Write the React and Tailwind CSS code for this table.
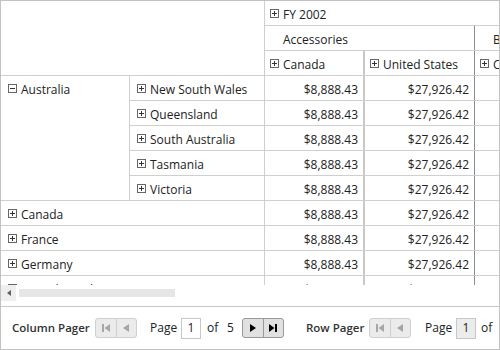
import React from "react";

const font = { fontFamily: '"Open Sans", "Noto Sans", sans-serif' };

const Toggle = ({ open }) => (
  <svg width="9" height="9" viewBox="0 0 9 9" className="shrink-0 -mt-[2px]">
    <rect x="0.5" y="0.5" width="8" height="8" fill="white" stroke="#666" />
    <line x1="2" y1="4.5" x2="7" y2="4.5" stroke="#333" />
    {!open && <line x1="4.5" y1="2" x2="4.5" y2="7" stroke="#333" />}
  </svg>
);

const states = ["New South Wales", "Queensland", "South Australia", "Tasmania", "Victoria"];
const countries = ["Canada", "France", "Germany", "United Kingdom"];

const Values = () => (
  <>
    <div className="w-[100px] shrink-0 h-full border-r-2 border-[#c8c8c8] flex items-center justify-end pr-[5px] pt-[3px]">
      $8,888.43
    </div>
    <div className="w-[110px] shrink-0 h-full border-r border-[#8c8c8c] flex items-center justify-end pr-[5px] pt-[3px]">
      $27,926.42
    </div>
    <div className="w-[120px] shrink-0 h-full"></div>
  </>
);

const Icon = ({ kind, color }) => (
  <svg width="10" height="10" viewBox="0 0 10 10" fill={color}>
    {kind === "first" && (
      <>
        <rect x="1" y="1" width="2" height="8" />
        <polygon points="9,1 9,9 3.5,5" />
      </>
    )}
    {kind === "prev" && <polygon points="8,1 8,9 2,5" />}
    {kind === "next" && <polygon points="2,1 2,9 8,5" />}
    {kind === "last" && (
      <>
        <polygon points="1,1 1,9 6.5,5" />
        <rect x="7" y="1" width="2" height="8" />
      </>
    )}
  </svg>
);

const Buttons = ({ enabled, kinds }) => (
  <div
    className={`flex h-[20px] w-[42px] rounded-[3px] border ${
      enabled ? "border-[#9a9a9a] bg-[#e1e1e1]" : "border-[#cfcfcf] bg-[#ebebeb]"
    }`}
  >
    <div className={`flex-1 flex items-center justify-center border-r ${enabled ? "border-[#9a9a9a]" : "border-[#cfcfcf]"}`}>
      <Icon kind={kinds[0]} color={enabled ? "#000" : "#a6a6a6"} />
    </div>
    <div className="flex-1 flex items-center justify-center">
      <Icon kind={kinds[1]} color={enabled ? "#000" : "#a6a6a6"} />
    </div>
  </div>
);

export default function App() {
  return (
    <div style={font} className="w-[500px] h-[350px] border border-[#c2c2c2] flex flex-col text-[12px] text-[#222] bg-white overflow-hidden">
      {/* grid viewport */}
      <div className="h-[284px] overflow-hidden shrink-0 flex flex-col">
        {/* column headers */}
        <div className="flex shrink-0">
          <div className="w-[264px] h-[75px] shrink-0 border-r border-b border-[#cfcfcf]"></div>
          <div className="flex flex-col w-[340px] shrink-0">
            <div className="h-[25px] border-b border-[#cfcfcf] flex items-center pl-[5px] pt-[3px] gap-[4px]">
              <Toggle />
              <span>FY 2002</span>
            </div>
            <div className="h-[25px] border-b border-[#cfcfcf] flex">
              <div className="w-[210px] shrink-0 border-r border-[#8c8c8c] flex items-center pl-[18px] pt-[3px]">Accessories</div>
              <div className="flex items-center pl-[18px] pt-[3px]">Bikes</div>
            </div>
            <div className="h-[25px] border-b border-[#cfcfcf] flex">
              <div className="w-[100px] shrink-0 border-r-2 border-[#c8c8c8] flex items-center pl-[5px] pt-[3px] gap-[4px]">
                <Toggle />
                <span>Canada</span>
              </div>
              <div className="w-[110px] shrink-0 border-r border-[#8c8c8c] flex items-center pl-[5px] pt-[3px] gap-[4px]">
                <Toggle />
                <span>United States</span>
              </div>
              <div className="flex items-center pl-[5px] pt-[3px] gap-[4px]">
                <Toggle />
                <span>Canada</span>
              </div>
            </div>
          </div>
        </div>

        {/* Australia group */}
        <div className="flex shrink-0">
          <div className="w-[129px] h-[125px] shrink-0 border-r border-b border-[#cfcfcf]">
            <div className="h-[24px] flex items-center pl-[7px] pt-[3px] gap-[4px]">
              <Toggle open />
              <span>Australia</span>
            </div>
          </div>
          <div className="flex flex-col">
            {states.map((s) => (
              <div key={s} className="h-[25px] border-b border-[#cfcfcf] flex">
                <div className="w-[135px] shrink-0 h-full border-r border-[#cfcfcf] flex items-center pl-[7px] pt-[3px] gap-[4px]">
                  <Toggle />
                  <span className="whitespace-nowrap">{s}</span>
                </div>
                <Values />
              </div>
            ))}
          </div>
        </div>

        {countries.map((c) => (
          <div key={c} className="h-[25px] shrink-0 border-b border-[#cfcfcf] flex">
            <div className="w-[264px] shrink-0 h-full border-r border-[#cfcfcf] flex items-center pl-[7px] pt-[3px] gap-[4px]">
              <Toggle />
              <span>{c}</span>
            </div>
            <Values />
          </div>
        ))}
      </div>

      {/* horizontal scrollbar */}
      <div className="h-[16px] shrink-0 flex items-center">
        <div className="w-[15px] h-full bg-[#efefef] flex items-center justify-center">
          <svg width="4" height="6" viewBox="0 0 4 6">
            <polygon points="4,0 4,6 0,3" fill="#606060" />
          </svg>
        </div>
        <div className="ml-[3px] w-[156px] h-[8px] bg-[#e6e6e6]"></div>
      </div>
      <div className="h-[5px] shrink-0"></div>

      {/* pager */}
      <div className="h-[43px] shrink-0 border-t border-[#c8c8c8] flex items-center whitespace-nowrap">
        <span className="ml-[11px] w-[76px] text-[11.5px] font-semibold text-[#333]">Column Pager</span>
        <div className="ml-[7px]">
          <Buttons kinds={["first", "prev"]} />
        </div>
        <span className="ml-[13px] w-[26px]">Page</span>
        <div className="ml-[5px] w-[20px] h-[21px] border border-[#c8c8c8] bg-white flex items-center justify-center">1</div>
        <span className="ml-[6px] w-[10px]">of</span>
        <span className="ml-[10px] w-[6px]">5</span>
        <div className="ml-[9px]">
          <Buttons enabled kinds={["next", "last"]} />
        </div>
        <span className="ml-[22px] w-[57px] text-[11.5px] font-semibold text-[#333]">Row Pager</span>
        <div className="ml-[6px]">
          <Buttons kinds={["first", "prev"]} />
        </div>
        <span className="ml-[14px] w-[26px]">Page</span>
        <div className="ml-[5px] w-[20px] h-[21px] border border-[#c8c8c8] bg-[#ececec] flex items-center justify-center">1</div>
        <span className="ml-[5px]">of</span>
      </div>
    </div>
  );
}
